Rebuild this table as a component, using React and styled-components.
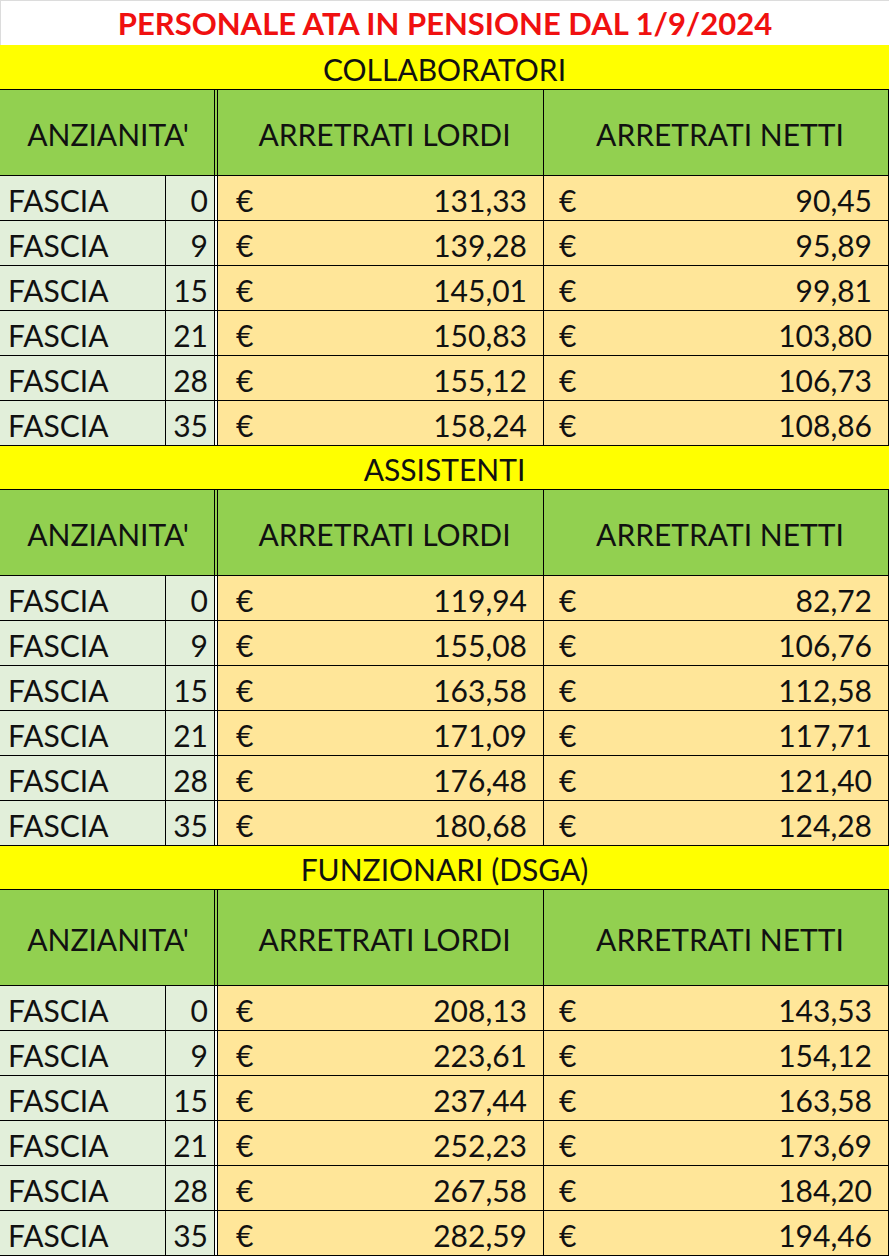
import React from 'react'
import styled, { createGlobalStyle } from 'styled-components'

const GlobalStyle = createGlobalStyle`
	* {
		box-sizing: border-box;
	}
	body {
		margin: 0;
		background: #fff;
		font-family: Lato, 'Open Sans', sans-serif;
	}
`

const Sheet = styled.div`
	width: 889px;
	color: #111;
`

const Title = styled.div`
	height: 45px;
	display: flex;
	align-items: center;
	justify-content: center;
	border-top: 1px solid #dcdcdc;
	border-left: 1px solid #dcdcdc;
	color: #f01010;
	font-weight: 700;
	font-size: 31px;
	padding-bottom: 1px;
`

const Band = styled.div`
	height: ${p => (p.first ? 45 : 44)}px;
	display: flex;
	align-items: center;
	justify-content: center;
	background: #ffff00;
	border-bottom: 1px solid #000;
	font-size: 30px;
	padding-top: 3px;
`

const Row = styled.div`
	display: grid;
	grid-template-columns: 166px 52px 326px 345px;
	height: ${p => p.height}px;
	border-bottom: 1px solid #000;
`

const HeadCell = styled.div`
	grid-column: ${p => (p.wide ? 'span 2' : 'auto')};
	display: flex;
	align-items: center;
	justify-content: center;
	background: #92d050;
	font-size: 30px;
	padding: 3px 0 0 ${p => (p.wide ? 2 : 8)}px;
	border-right: ${p => (p.double ? '4px double #000' : '1px solid #000')};
`

const LabelCell = styled.div`
	display: flex;
	align-items: center;
	justify-content: ${p => (p.num ? 'flex-end' : 'flex-start')};
	padding: 3px ${p => (p.num ? 6 : 0)}px 0 ${p => (p.num ? 0 : 8)}px;
	font-size: 30px;
	background: #e2efda;
	background-clip: padding-box;
	border-right: ${p => (p.double ? '4px double #000' : '1px solid #000')};
`

const MoneyCell = styled.div`
	display: flex;
	align-items: center;
	justify-content: space-between;
	padding: 3px ${p => p.right}px 0 ${p => p.left}px;
	font-size: 30px;
	background: #ffe699;
	border-right: 1px solid #000;
`

const sections = [
	{
		name: 'COLLABORATORI',
		head: 86,
		rows: [
			[0, '131,33', '90,45'],
			[9, '139,28', '95,89'],
			[15, '145,01', '99,81'],
			[21, '150,83', '103,80'],
			[28, '155,12', '106,73'],
			[35, '158,24', '108,86']
		]
	},
	{
		name: 'ASSISTENTI',
		head: 86,
		rows: [
			[0, '119,94', '82,72'],
			[9, '155,08', '106,76'],
			[15, '163,58', '112,58'],
			[21, '171,09', '117,71'],
			[28, '176,48', '121,40'],
			[35, '180,68', '124,28']
		]
	},
	{
		name: 'FUNZIONARI (DSGA)',
		head: 96,
		rows: [
			[0, '208,13', '143,53'],
			[9, '223,61', '154,12'],
			[15, '237,44', '163,58'],
			[21, '252,23', '173,69'],
			[28, '267,58', '184,20'],
			[35, '282,59', '194,46']
		]
	}
]

function Section({ name, head, rows, first }) {
	return (
		<>
			<Band first={first}>{name}</Band>
			<Row height={head}>
				<HeadCell wide double>
					ANZIANITA'
				</HeadCell>
				<HeadCell>ARRETRATI LORDI</HeadCell>
				<HeadCell>ARRETRATI NETTI</HeadCell>
			</Row>
			{rows.map(([years, gross, net]) => (
				<Row height={45} key={years}>
					<LabelCell>FASCIA</LabelCell>
					<LabelCell num double>
						{years}
					</LabelCell>
					<MoneyCell left={18} right={16}>
						<span>€</span>
						<span>{gross}</span>
					</MoneyCell>
					<MoneyCell left={15} right={16}>
						<span>€</span>
						<span>{net}</span>
					</MoneyCell>
				</Row>
			))}
		</>
	)
}

export default function App() {
	return (
		<>
			<GlobalStyle />
			<Sheet>
				<Title>PERSONALE ATA IN PENSIONE DAL 1/9/2024</Title>
				{sections.map((s, i) => (
					<Section key={s.name} {...s} first={i === 0} />
				))}
			</Sheet>
		</>
	)
}
